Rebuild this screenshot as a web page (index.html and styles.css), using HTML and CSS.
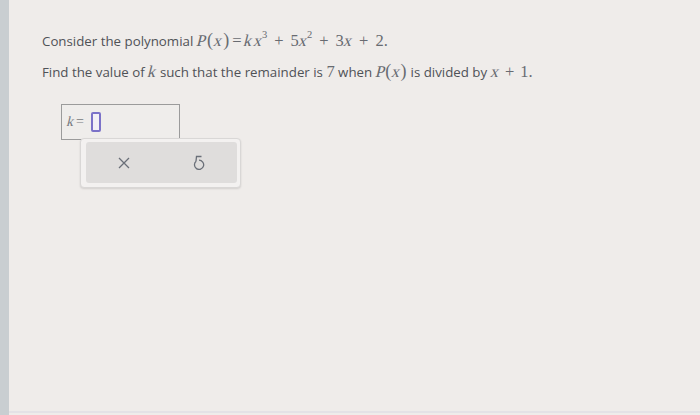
FILE: index.html
```html
<!DOCTYPE html>
<html>
<head>
<meta charset="utf-8">
<link rel="stylesheet" href="styles.css">
</head>
<body>
<div class="strip"></div>
<main class="page">
  <p class="line l1">Consider the polynomial <span class="m"><i>P</i><span class="paren">(</span><i>x</i><span class="paren">)</span><span class="eq">=</span><i>k</i><i class="x2">x</i><sup>3</sup><span class="op">+</span>5<i>x</i><sup>2</sup><span class="op">+</span>3<i>x</i><span class="op">+</span>2.</span></p>
  <p class="line l2">Find the value of <span class="m"><i>k</i></span> such that the remainder is <span class="m">7</span> when <span class="m"><i>P</i><span class="paren">(</span><i>x</i><span class="paren">)</span></span> is divided by <span class="m"><i>x</i><span class="op">+</span>1.</span></p>
  <div class="answer">
    <span class="m"><i>k</i><span class="eq2">=</span></span>
    <span class="cursor"></span>
  </div>
  <div class="tools">
    <div class="tools-inner">
      <button class="btn" aria-label="clear">
        <svg width="12" height="12" viewBox="0 0 12 12"><path d="M1 1 L11 11 M11 1 L1 11" stroke="#6a6f78" stroke-width="1.3" fill="none"/></svg>
      </button>
      <button class="btn" aria-label="undo">
        <svg width="12" height="15" viewBox="0 0 12 15"><path d="M3.2 6.2 A4.6 4.6 0 1 0 6 5.2" stroke="#6a6f78" stroke-width="1.3" fill="none"/><path d="M8.5 1.5 L3.5 1.5 L3 6.3" stroke="#6a6f78" stroke-width="1.3" fill="none"/></svg>
      </button>
    </div>
  </div>
</main>
</body>
</html>
```
FILE: styles.css
```css
html, body {
  margin: 0;
  padding: 0;
}
body {
  width: 700px;
  height: 415px;
  background: #efecea;
  display: flex;
  overflow: hidden;
  font-family: "Open Sans", "Liberation Sans", sans-serif;
  color: #4f5257;
}
.strip {
  width: 9px;
  flex: none;
  background: #c9ced1;
}
.page {
  flex: 1;
  padding: 30px 0 0 33px;
  border-bottom: 2px solid #e4e2e6;
  margin-bottom: 2px;
}
.line {
  margin: 0;
  font-size: 13.3px;
  white-space: nowrap;
}
.l1 { height: 31px; }
.l2 { height: 31px; }
.m {
  font-family: "Liberation Serif", "Times New Roman", serif;
  font-size: 16.5px;
  color: #686b71;
}
.m i {
  font-style: normal;
  display: inline-block;
  transform: skewX(-14deg);
}
.paren { font-size: 18px; margin: 0 1px; }
.l2 .paren { margin: 0 0.5px; }
.eq { margin: 0 3px 0 2px; }
.op { margin: 0 7px; }
.l2 .op { margin: 0 6px; }
.x2 { margin-left: 1px; }
sup {
  font-size: 10.5px;
  vertical-align: 8px;
  line-height: 0;
}
.answer {
  margin: 12px 0 0 19px;
  width: 119px;
  height: 36px;
  border: 1px solid #9b9b9b;
  display: flex;
  align-items: center;
  padding-left: 5px;
  box-sizing: border-box;
  background: #efedeb;
}
.answer .m { font-size: 14px; color: #777a80; }
.eq2 { margin: 0 0 0 2px; }
.cursor {
  width: 6px;
  height: 16px;
  border: 2px solid #7b72c8;
  border-radius: 2px;
  margin-left: 7px;
  background: #f2f0f6;
}
.tools {
  margin: -2px 0 0 38px;
  width: 161px;
  height: 50px;
  box-sizing: border-box;
  border: 1px solid #d9d7d6;
  border-radius: 4px;
  background: #f3f1f0;
  padding: 3px 3px 4px 5px;
  box-shadow: 0 1px 2px rgba(0,0,0,0.12);
}
.tools-inner {
  height: 100%;
  background: #dfdddc;
  border-radius: 3px;
  display: flex;
  justify-content: space-around;
  align-items: center;
}
.btn {
  border: none;
  background: transparent;
  padding: 0;
  width: 30px;
  height: 30px;
  display: flex;
  align-items: center;
  justify-content: center;
}
```
